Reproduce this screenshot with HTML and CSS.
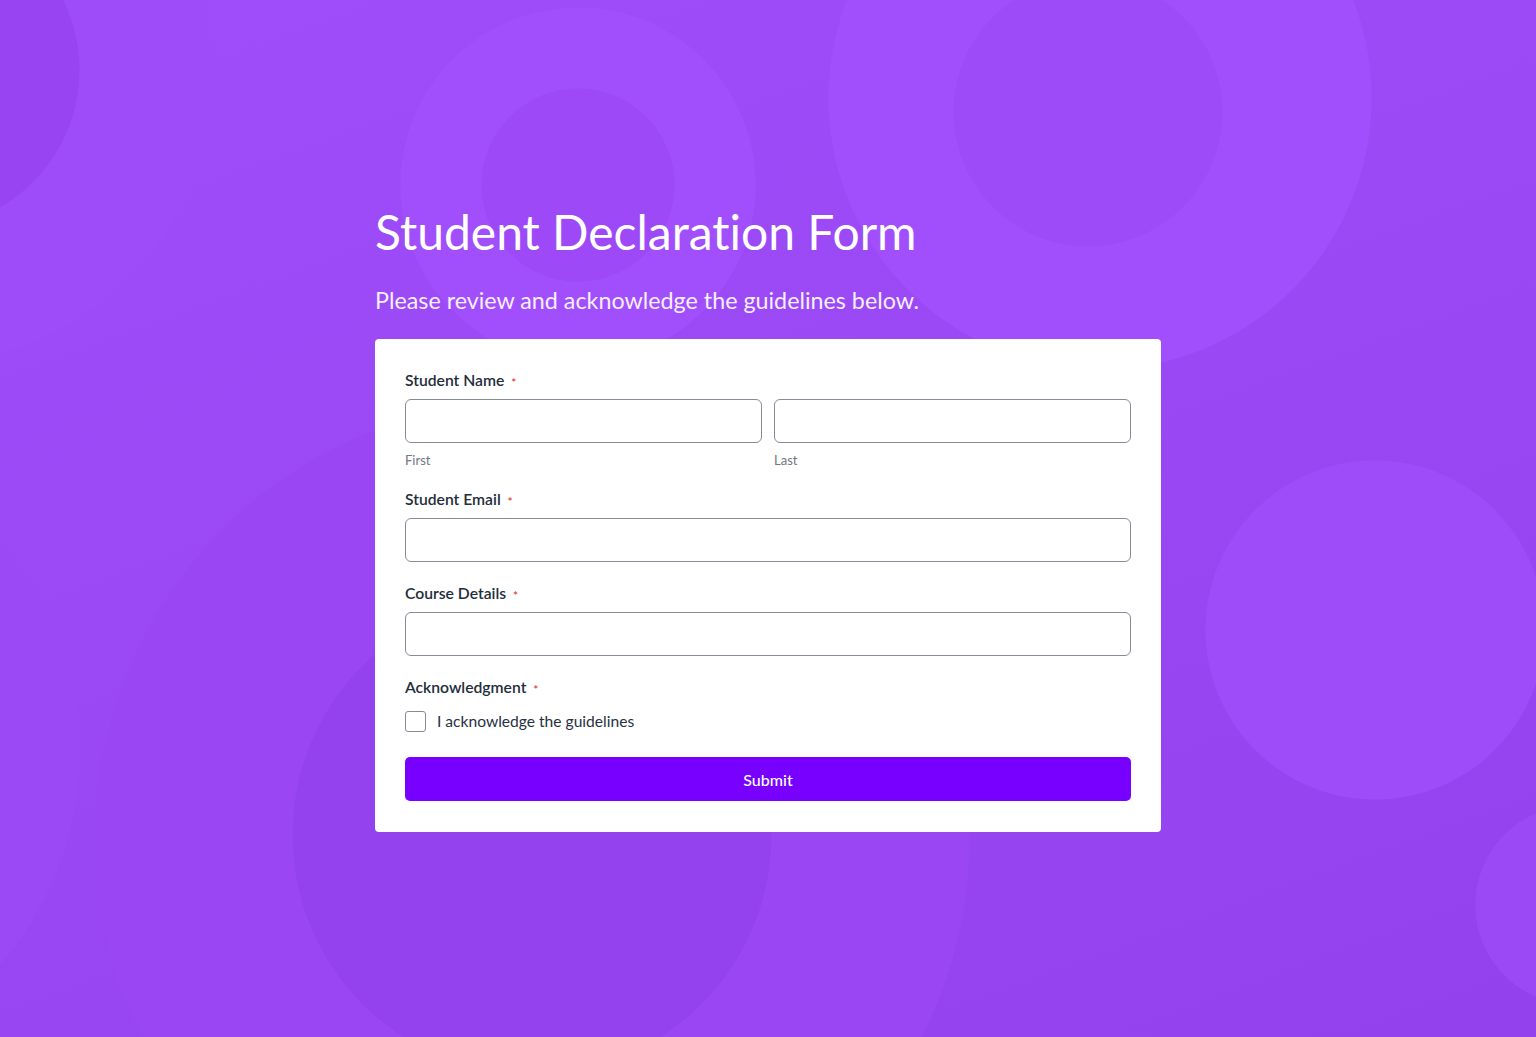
FILE: index.html
```html
<!DOCTYPE html>
<html lang="en">
<head>
<meta charset="utf-8">
<title>Student Declaration Form</title>
<link rel="stylesheet" href="styles.css">
</head>
<body>
<main class="page">
  <div class="wrap">
    <h1 class="title">Student Declaration Form</h1>
    <p class="subtitle">Please review and acknowledge the guidelines below.</p>
    <form class="card">
      <div class="field">
        <div class="label">Student Name <span class="req">*</span></div>
        <div class="name-row">
          <div class="sub-field">
            <input class="input" type="text" aria-label="First">
            <div class="sublabel">First</div>
          </div>
          <div class="sub-field">
            <input class="input" type="text" aria-label="Last">
            <div class="sublabel">Last</div>
          </div>
        </div>
      </div>
      <div class="field">
        <div class="label">Student Email <span class="req">*</span></div>
        <input class="input" type="email" aria-label="Student Email">
      </div>
      <div class="field">
        <div class="label">Course Details <span class="req">*</span></div>
        <input class="input" type="text" aria-label="Course Details">
      </div>
      <div class="field field-last">
        <div class="label">Acknowledgment <span class="req">*</span></div>
        <label class="check-row">
          <span class="checkbox"></span>
          <span class="check-text">I acknowledge the guidelines</span>
        </label>
      </div>
      <button class="submit" type="button">Submit</button>
    </form>
  </div>
</main>
</body>
</html>
```
FILE: styles.css
```css
* { box-sizing: border-box; }
html, body { margin: 0; padding: 0; }
body {
  font-family: Lato, "Open Sans", "Liberation Sans", sans-serif;
  font-variant-ligatures: none;
  min-height: 100vh;
  background-color: #9a47f4;
  background-image:
    radial-gradient(circle 159px at -79px 70px, #9944f3 99.4%, rgba(0,0,0,0) 100%),
    radial-gradient(circle 294px at -79px 70px, #9e4cf9 99.6%, rgba(0,0,0,0) 100%),
    radial-gradient(circle 97px at 578px 185px, #9d49f8 99.2%, rgba(0,0,0,0) 100%),
    radial-gradient(circle 178px at 578px 185px, #a14efc 99.4%, rgba(0,0,0,0) 100%),
    radial-gradient(circle 135px at 1088px 112px, #9d4af9 99.2%, rgba(0,0,0,0) 100%),
    radial-gradient(circle 272px at 1100px 98px, #a14efc 99.6%, rgba(0,0,0,0) 100%),
    radial-gradient(circle 240px at 532px 835px, #9342ee 99.6%, rgba(0,0,0,0) 100%),
    radial-gradient(circle 438px at 532px 838px, #9a47f3 99.7%, rgba(0,0,0,0) 100%),
    radial-gradient(circle 330px at -250px 750px, #9b48f5 99.7%, rgba(0,0,0,0) 100%),
    radial-gradient(circle 170px at 1375px 630px, #9e4bf9 99.4%, rgba(0,0,0,0) 100%),
    radial-gradient(circle 100px at 1575px 905px, #9b48f5 99.2%, rgba(0,0,0,0) 100%),
    linear-gradient(160deg, #9f4cfa 0%, #9a47f4 50%, #9341ed 100%);
  background-repeat: no-repeat;
}
.page {
  min-height: 100vh;
  display: flex;
  justify-content: center;
  padding-top: 202px;
}
.wrap {
  width: 786px;
}
.title {
  margin: 0;
  font-size: 48px;
  font-weight: 400;
  line-height: 60px;
  color: #ffffff;
}
.subtitle {
  margin: 23px 0 0 0;
  font-size: 23.3px;
  line-height: 30px;
  color: #f6efff;
  font-weight: 400;
}
.card {
  margin-top: 24px;
  background: #ffffff;
  border-radius: 4px;
  padding: 30px 30px 31px 30px;
  display: flex;
  flex-direction: column;
}
.field { margin-bottom: 20px; }
.field-last { margin-bottom: 0; }
.label {
  font-size: 15.7px;
  line-height: 22px;
  height: 22px;
  font-weight: 600;
  color: #232d3b;
  margin-bottom: 8px;
}
.req {
  color: #e0412f;
  font-size: 12px;
  line-height: 0;
  vertical-align: -1px;
  margin-left: 3px;
}
.name-row {
  display: grid;
  grid-template-columns: 1fr 1fr;
  column-gap: 12px;
}
.input {
  display: block;
  width: 100%;
  height: 44px;
  border: 1px solid #868c95;
  border-radius: 6px;
  background: #ffffff;
  font: inherit;
  margin: 0;
  padding: 0 12px;
  outline: none;
}
.sublabel {
  margin-top: 9px;
  font-size: 13px;
  line-height: 16px;
  height: 16px;
  color: #6f7782;
}
.check-row {
  display: flex;
  align-items: center;
  height: 24px;
  margin-top: 11px;
  gap: 11px;
}
.checkbox {
  width: 21px;
  height: 21px;
  border: 1px solid #868c95;
  border-radius: 3px;
  background: #fff;
  flex: none;
}
.check-text {
  font-size: 15.6px;
  color: #27313f;
  line-height: 22px;
}
.submit {
  margin-top: 24px;
  height: 44px;
  width: 100%;
  border: none;
  border-radius: 5px;
  background: #7700ff;
  color: #ffffff;
  font: inherit;
  font-size: 16px;
  font-weight: 500;
  cursor: pointer;
}
```
